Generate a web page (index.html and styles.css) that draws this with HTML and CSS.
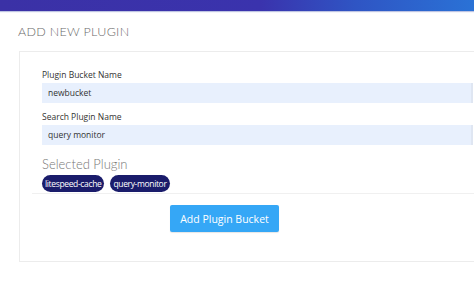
FILE: index.html
```html
<!DOCTYPE html>
<html>
<head>
<meta charset="utf-8">
<link rel="stylesheet" href="styles.css">
</head>
<body>
<div class="topbar"></div>
<main class="page">
  <h1 class="title">ADD NEW PLUGIN</h1>
  <section class="card">
    <div class="field">
      <label class="label">Plugin Bucket Name</label>
      <div class="input">newbucket</div>
    </div>
    <div class="field">
      <label class="label">Search Plugin Name</label>
      <div class="input">query monitor</div>
    </div>
    <h2 class="subtitle">Selected Plugin</h2>
    <div class="badges">
      <span class="badge">litespeed-cache</span>
      <span class="badge">query-monitor</span>
    </div>
    <div class="actions">
      <button class="btn">Add Plugin Bucket</button>
    </div>
  </section>
</main>
</body>
</html>
```
FILE: styles.css
```css
* { box-sizing: border-box; }
html, body { margin: 0; padding: 0; background: #fff; overflow: hidden; }
body { font-family: "Open Sans", "Liberation Sans", sans-serif; color: #333; }
.topbar {
  height: 11px;
  background: linear-gradient(90deg, #3b31a6 0%, #3a33ad 55%, #2f55c4 75%, #2a72d6 100%);
  box-shadow: 0 1px 1px rgba(40,60,160,0.3);
}
.page { padding: 13px 0 0 19px; }
.title {
  margin: 0 0 0 -1px;
  font-family: Lato, "Liberation Sans", sans-serif;
  font-weight: 300;
  font-size: 12.5px;
  letter-spacing: 0.3px;
  color: #6a6a6a;
  line-height: 16px;
}
.card {
  margin-top: 11px;
  border: 1px solid #ececec;
  border-right: none;
  height: 211px;
  padding: 17px 0 0 22px;
}
.field { display: flex; flex-direction: column; }
.label {
  font-size: 8.5px;
  color: #333;
  line-height: 12px;
  height: 14px;
}
.input {
  height: 20px;
  background: #e8f0fd;
  font-size: 8.5px;
  color: #333;
  line-height: 20px;
  padding-left: 6px;
  margin-bottom: 8px;
  border-right: 2px solid #dfe6f2;
  width: 431px;
}
.subtitle {
  margin: 3px 0 0 0;
  font-family: Lato, "Liberation Sans", sans-serif;
  font-weight: 300;
  font-size: 13px;
  color: #777;
  line-height: 16px;
}
.badges {
  display: flex;
  gap: 6px;
  margin-top: 3px;
  padding-bottom: 1px;
  border-bottom: 1px solid #f0f0f0;
  margin-left: -10px;
  padding-left: 10px;
}
.badge {
  background: #1a1c6b;
  color: #fff;
  font-size: 8.5px;
  line-height: 17px;
  height: 17px;
  padding: 0 3px;
  border-radius: 9px;
  letter-spacing: -0.35px;
}
.actions { padding: 11px 0 0 128px; }
.btn {
  font-family: "Open Sans", "Liberation Sans", sans-serif;
  background: #35a7f6;
  border: none;
  border-radius: 2px;
  color: #fff;
  font-size: 10.5px;
  width: 109px;
  height: 27px;
  padding: 0;
  box-shadow: 0 1px 1px rgba(0,0,0,0.1);
}
```
